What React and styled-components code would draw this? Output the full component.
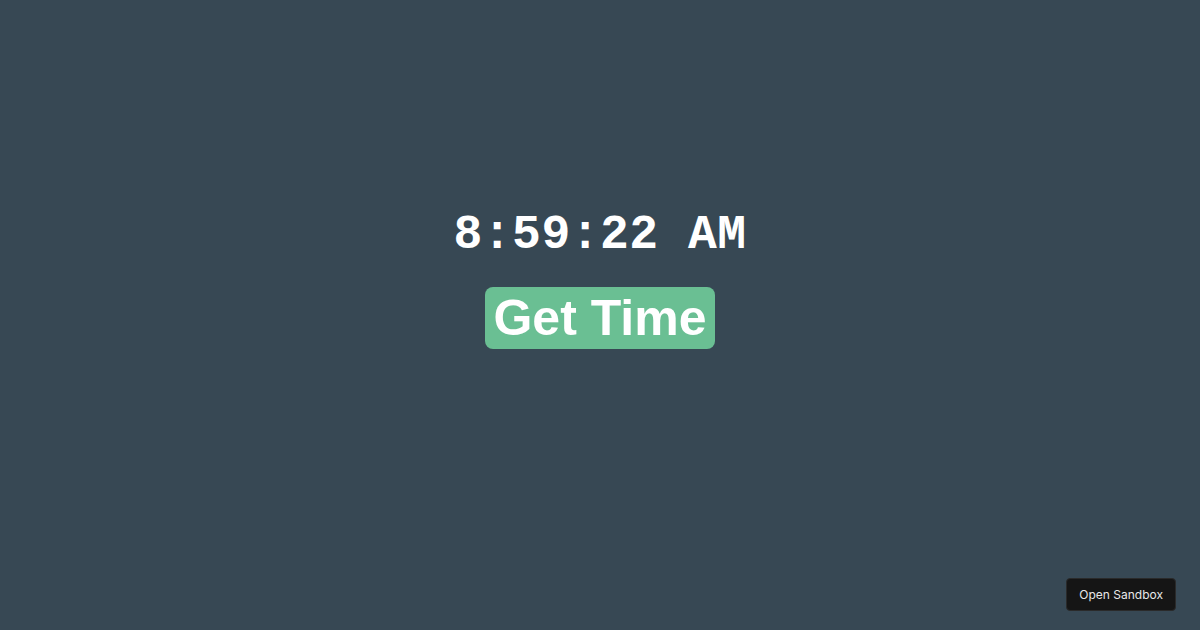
import styled, { createGlobalStyle } from 'styled-components';

const GlobalStyle = createGlobalStyle`
  html, body {
    margin: 0;
    height: 100%;
    background: #374854;
  }
  #root {
    min-height: 100%;
  }
`;

const Page = styled.div`
  min-height: 630px;
  display: flex;
  flex-direction: column;
  align-items: center;
  padding-top: 207px;
  box-sizing: border-box;
  background: #374854;
`;

const Clock = styled.div`
  font-family: "Liberation Mono", "Courier New", monospace;
  font-weight: bold;
  font-size: 48px;
  letter-spacing: 0.5px;
  line-height: 56px;
  color: #ffffff;
  margin-bottom: 24px;
`;

const TimeButton = styled.button`
  font-family: "Liberation Sans", Arial, sans-serif;
  font-weight: bold;
  font-size: 50px;
  line-height: 58px;
  color: #ffffff;
  background: #6abf93;
  border: none;
  border-radius: 8px;
  padding: 2px 8px;
  cursor: pointer;
`;

const SandboxLink = styled.a`
  position: fixed;
  right: 24px;
  bottom: 19px;
  padding: 0 12px;
  height: 33px;
  display: flex;
  align-items: center;
  background: #151515;
  border: 1px solid #2a2a2a;
  border-radius: 4px;
  color: #e8e8e8;
  font-family: Inter, "Liberation Sans", sans-serif;
  font-size: 12px;
  text-decoration: none;
  box-sizing: border-box;
`;

export default function App() {
  return (
    <>
      <GlobalStyle />
      <Page>
        <Clock>8:59:22 AM</Clock>
        <TimeButton>Get Time</TimeButton>
      </Page>
      <SandboxLink href="#">Open Sandbox</SandboxLink>
    </>
  );
}
